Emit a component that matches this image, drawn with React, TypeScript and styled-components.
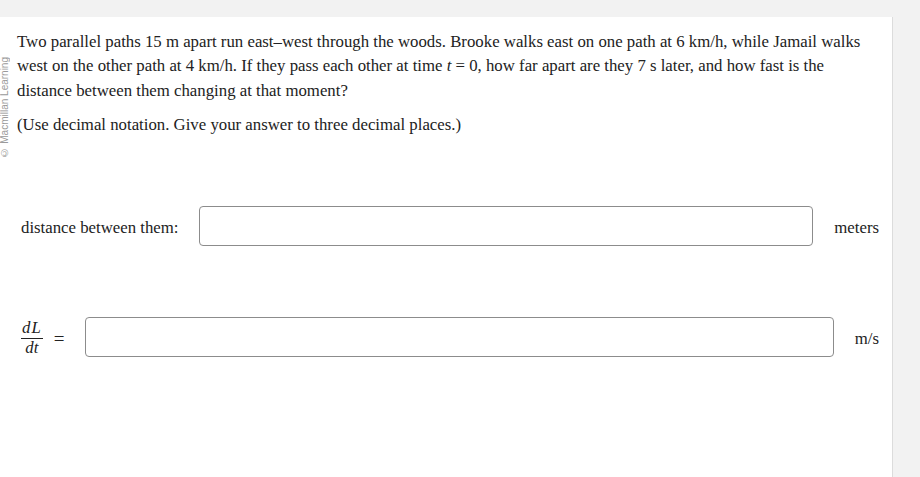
import React, { FC } from "react";
import styled, { createGlobalStyle } from "styled-components";

const GlobalStyle = createGlobalStyle`
	html, body {
		margin: 0;
		padding: 0;
		background: #f2f2f2;
	}
	body {
		font-family: "Liberation Serif", "Times New Roman", serif;
		color: #222;
	}
`;

const Page = styled.div`
	display: flex;
	height: 477px;
	overflow: hidden;
`;

const Panel = styled.main`
	position: relative;
	display: flex;
	flex-direction: column;
	width: 893px;
	margin-top: 17px;
	background: #fff;
	border-right: 1px solid #dcdcdc;
	box-sizing: border-box;
	padding: 13px 13px 0 17px;
`;

const Copyright = styled.span`
	position: absolute;
	left: 0;
	top: 40px;
	writing-mode: vertical-rl;
	transform: rotate(180deg);
	font-family: "Liberation Sans", Arial, sans-serif;
	font-size: 10px;
	line-height: 10px;
	color: #9a9a9a;
	white-space: nowrap;
`;

const Question = styled.p`
	margin: 0;
	font-size: 16.8px;
	line-height: 24.3px;
`;

const Note = styled(Question)`
	margin-top: 10px;
`;

const Var = styled.i`
	font-style: italic;
`;

const Answers = styled.div`
	display: flex;
	flex-direction: column;
	gap: 70px;
	margin-top: 69px;
	padding-left: 4px;
`;

const AnswerRow = styled.div`
	display: flex;
	align-items: center;
	font-size: 16.8px;
	line-height: 24px;
`;

const Label = styled.span`
	flex: none;
	margin-right: 20px;
	padding-top: 4px;
`;

const Field = styled.input`
	flex: 1;
	min-width: 0;
	height: 40px;
	box-sizing: border-box;
	border: 1px solid #8c8c8c;
	border-radius: 4px;
	background: #fff;
	outline: none;
	font: inherit;
	padding: 0 8px;
`;

const Unit = styled.span`
	flex: none;
	margin-left: 21px;
	padding-top: 4px;
`;

const Fraction = styled.span`
	display: inline-flex;
	flex-direction: column;
	align-items: center;
	font-style: italic;
	line-height: 18px;
	padding-top: 3px;
`;

const Numer = styled.span`
	padding: 0 1px 1px;
	border-bottom: 1px solid #222;
	letter-spacing: 1px;
`;

const Denom = styled.span``;

const Equals = styled.span`
	margin: 0 21px 0 11px;
	padding-top: 5px;
	font-size: 19px;
`;

const App: FC = () => {
	return (
		<Page>
			<GlobalStyle />
			<Panel>
				<Copyright>© Macmillan Learning</Copyright>
				<Question>
					Two parallel paths 15 m apart run east–west through the woods. Brooke walks east on one path at 6 km/h,
					while Jamail walks west on the other path at 4 km/h. If they pass each other at time <Var>t</Var> = 0, how
					far apart are they 7 s later, and how fast is the distance between them changing at that moment?
				</Question>
				<Note>(Use decimal notation. Give your answer to three decimal places.)</Note>

				<Answers>
					<AnswerRow>
						<Label>distance between them:</Label>
						<Field aria-label="distance between them" />
						<Unit>meters</Unit>
					</AnswerRow>

					<AnswerRow>
						<Fraction>
							<Numer>dL</Numer>
							<Denom>dt</Denom>
						</Fraction>
						<Equals>=</Equals>
						<Field aria-label="dL/dt" />
						<Unit>m/s</Unit>
					</AnswerRow>
				</Answers>
			</Panel>
		</Page>
	);
};

export default App;
